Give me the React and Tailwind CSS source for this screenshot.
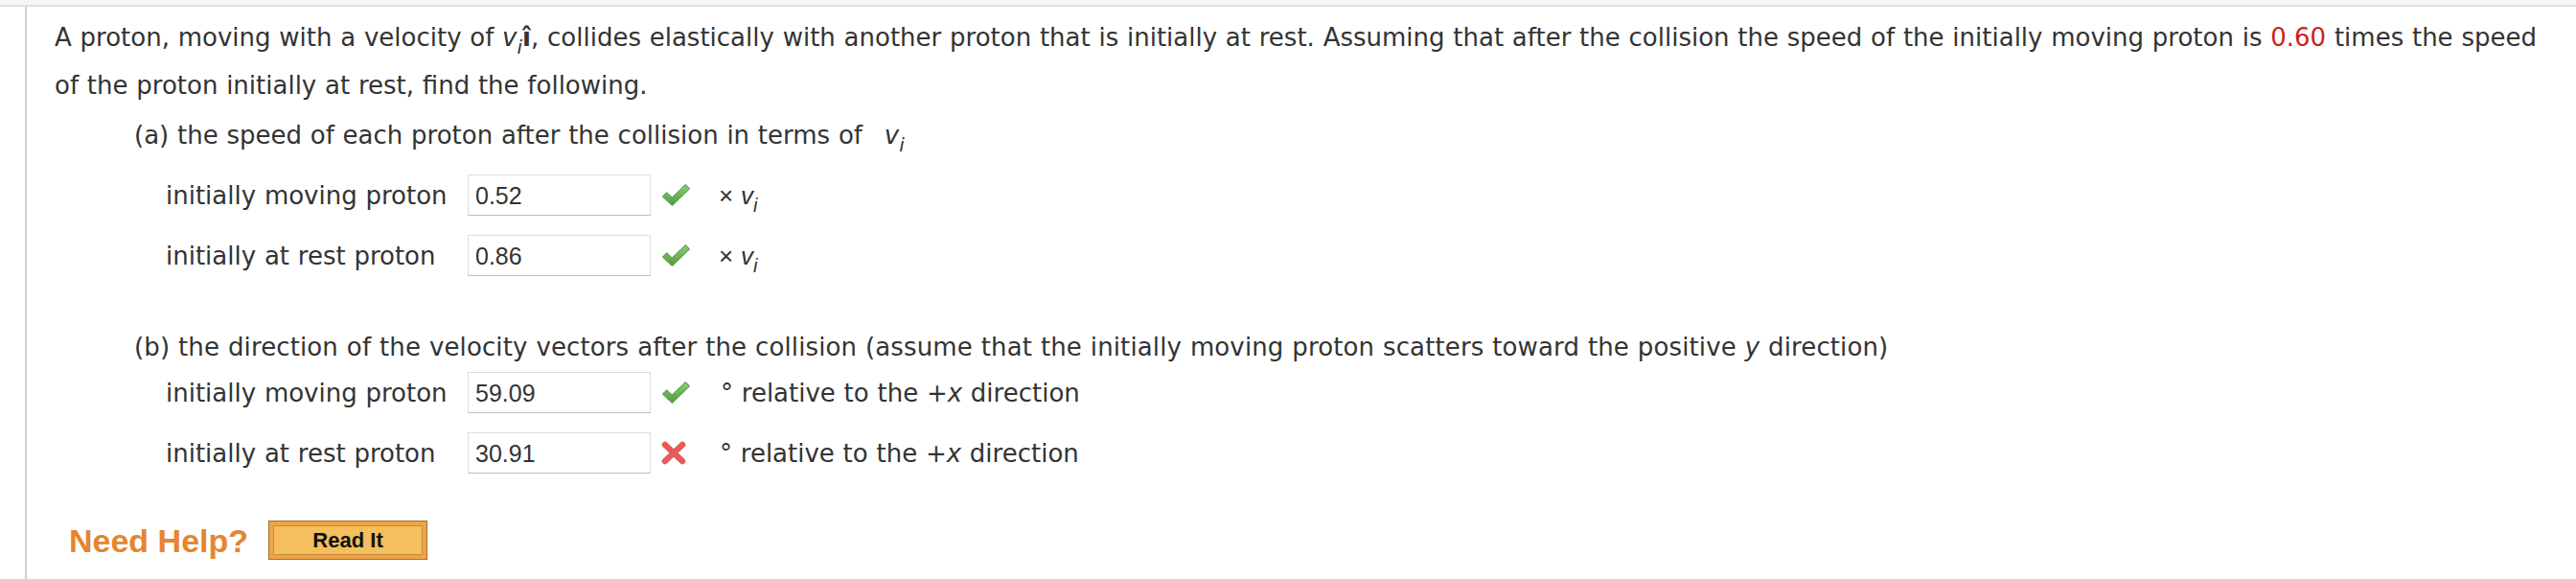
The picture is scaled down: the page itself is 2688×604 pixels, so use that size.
import React from 'react';

function Check() {
  return (
    <svg width="31" height="25" viewBox="0 0 30 24">
      <defs>
        <linearGradient id="chk" x1="0" y1="0" x2="0" y2="1">
          <stop offset="0" stopColor="#8fd07a" />
          <stop offset="1" stopColor="#4c9a3e" />
        </linearGradient>
      </defs>
      <path
        d="M1.5 13.5 L5.5 9.5 L11 14.5 L24.5 1.5 L28.5 5.5 L11 22.5 Z"
        fill="url(#chk)"
        stroke="#5b9e4c"
        strokeWidth="1"
        strokeLinejoin="round"
      />
    </svg>
  );
}

function Cross() {
  return (
    <svg width="26" height="25" viewBox="0 0 26 25">
      <path d="M4 4 L22 21 M22 4 L4 21" stroke="#e65b5b" strokeWidth="6.5" strokeLinecap="round" />
    </svg>
  );
}

function Vi({ className = '' }) {
  return (
    <span className={'italic ' + className}>
      v<span className="relative top-[8px] text-[20px]">i</span>
    </span>
  );
}

function Row({ label, value, correct, unit }) {
  return (
    <div className="flex items-center h-[43px] pl-[116px]">
      <div className="w-[315px] leading-none whitespace-nowrap">{label}</div>
      <div className="w-[191px] h-[43px] border border-[#dcdcdc] border-b-[#bdbdbd] bg-white pl-[7px] pt-[3px] flex items-center font-['Liberation_Sans',Arial,sans-serif] text-[25px] text-[#333]">
        {value}
      </div>
      <div className="w-[31px] ml-[11px] flex items-center">{correct ? <Check /> : <Cross />}</div>
      {unit}
    </div>
  );
}

export default function App() {
  const speedUnit = (
    <span className="ml-[29px] font-['Liberation_Sans',Arial,sans-serif] text-[26px] leading-none whitespace-nowrap">
      × <Vi />
    </span>
  );
  const dirUnit = (off) => (
    <span className={off ? 'ml-[30px] leading-none whitespace-nowrap' : 'ml-[31px] leading-none whitespace-nowrap'}>
      ° relative to the +<span className="italic">x</span> direction
    </span>
  );

  return (
    <div className="min-h-screen bg-white text-[#333] font-['DejaVu_Sans',Verdana,sans-serif] text-[26px] [word-spacing:0.5px]">
      <div className="h-[7px] bg-[#f5f5f5] border-b-2 border-[#dedede]" />
      <div className="ml-[26px] border-l-2 border-[#cfcfcf] pl-[29px] pt-[8px] pb-[20px]">
        <p className="leading-[48px] whitespace-nowrap">
          A proton, moving with a velocity of <Vi />
          <span className="font-bold">î</span>, collides elastically with another proton that is initially at rest. Assuming that after the collision the speed of the initially moving proton is{' '}
          <span className="text-[#cc1f1a]">0.60</span> times the speed
          <br />
          of the proton initially at rest, find the following.
        </p>

        <p className="mt-[4px] pl-[83px] leading-[48px] whitespace-nowrap">
          (a) the speed of each proton after the collision in terms of <Vi className="ml-[14px]" />
        </p>

        <div className="mt-[15px] flex flex-col gap-[20px]">
          <Row label="initially moving proton" value="0.52" correct unit={speedUnit} />
          <Row label="initially at rest proton" value="0.86" correct unit={speedUnit} />
        </div>

        <p className="mt-[50px] pl-[83px] leading-[48px] whitespace-nowrap tracking-[0.12px]">
          (b) the direction of the velocity vectors after the collision (assume that the initially moving proton scatters toward the positive{' '}
          <span className="italic">y</span> direction)
        </p>

        <div className="mt-[2px] flex flex-col gap-[20px]">
          <Row label="initially moving proton" value="59.09" correct unit={dirUnit(false)} />
          <Row label="initially at rest proton" value="30.91" correct={false} unit={dirUnit(true)} />
        </div>

        <div className="mt-[49px] flex items-center pl-[15px]">
          <span className="font-['Liberation_Sans',Arial,sans-serif] font-bold text-[34px] text-[#e5852e] leading-none [word-spacing:0px]">
            Need Help?
          </span>
          <button className="ml-[21px] w-[166px] h-[41px] border border-[#a0702f] bg-[#f0a445] p-[4px]">
            <span className="flex items-center justify-center h-full border border-[#c48a42] bg-[#f4bf5c] font-['Liberation_Sans',Arial,sans-serif] font-bold text-[22px] text-[#111] [word-spacing:0px]">
              Read It
            </span>
          </button>
        </div>
      </div>
    </div>
  );
}
